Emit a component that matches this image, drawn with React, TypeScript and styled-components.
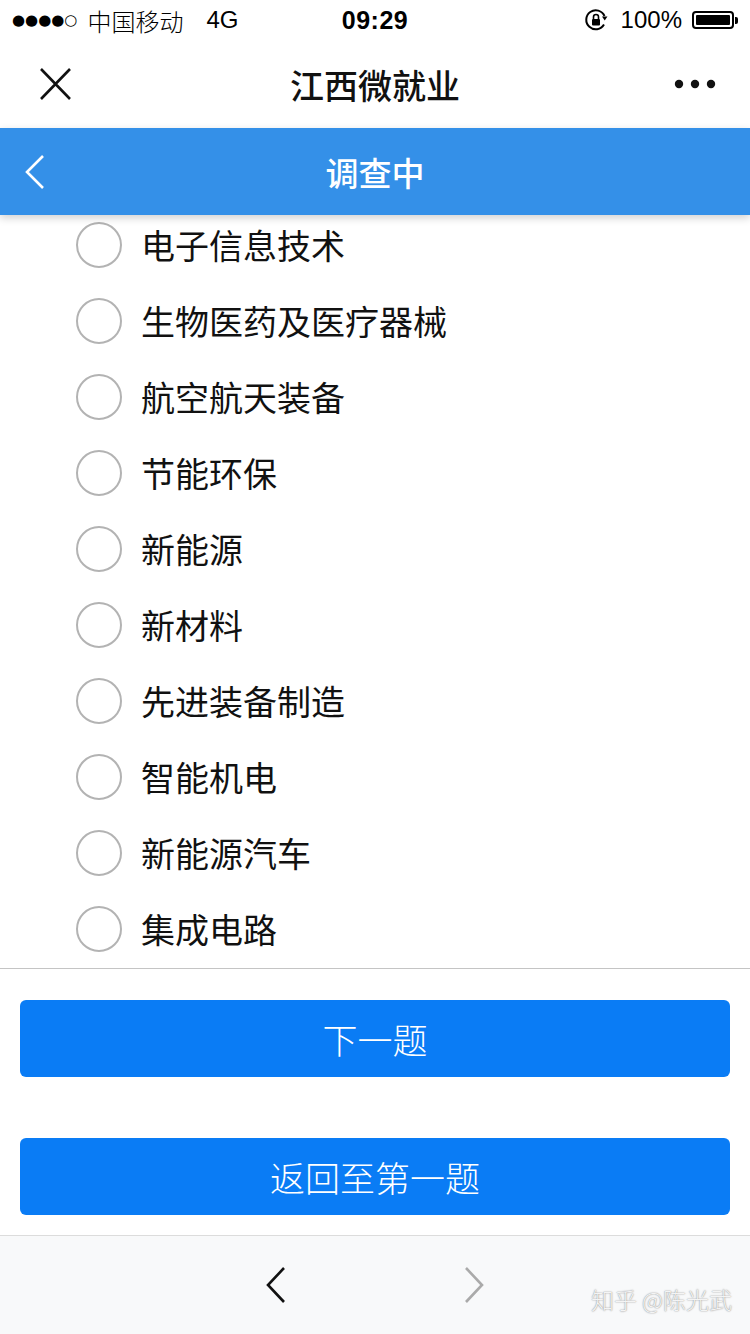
import styled, { createGlobalStyle } from "styled-components";

const GlobalStyle = createGlobalStyle`
  html, body {
    margin: 0;
    padding: 0;
    background: #ffffff;
  }
  body {
    font-family: "Noto Sans CJK SC", "Liberation Sans", sans-serif;
    color: #111;
  }
`;

const Screen = styled.div`
  width: 750px;
  height: 1334px;
  display: flex;
  flex-direction: column;
  overflow: hidden;
  background: #fff;
`;

const StatusBar = styled.div`
  height: 40px;
  display: grid;
  grid-template-columns: 1fr auto 1fr;
  align-items: center;
  padding: 0 12px;
  font-family: "Liberation Sans", "Noto Sans CJK SC", sans-serif;
  font-size: 24px;
  color: #000;
`;

const Carrier = styled.div`
  display: flex;
  align-items: center;
  gap: 10px;
  font-family: "Noto Sans CJK SC", sans-serif;
  font-weight: 300;
`;

const Signal = styled.span`
  font-size: 15px;
  font-weight: 400;
  font-family: "DejaVu Sans", sans-serif;
`;

const Network = styled.span`
  margin-left: 13px;
  font-weight: 400;
  font-family: "Liberation Sans", sans-serif;
`;

const Clock = styled.div`
  font-weight: 700;
  font-size: 25px;
  letter-spacing: 0.5px;
`;

const StatusRight = styled.div`
  display: flex;
  align-items: center;
  justify-content: flex-end;
  gap: 8px;
`;

const Percent = styled.span`
  margin-left: 4px;
`;

const Battery = styled.div`
  display: flex;
  align-items: center;
  margin-left: 2px;
`;

const BatteryBody = styled.div`
  width: 42px;
  height: 18px;
  border: 2px solid #000;
  border-radius: 4px;
  padding: 2px;
  box-sizing: border-box;
  display: flex;
`;

const BatteryFill = styled.div`
  flex: 1;
  background: #000;
  border-radius: 1px;
`;

const BatteryNub = styled.div`
  width: 3px;
  height: 7px;
  background: #000;
  border-radius: 0 2px 2px 0;
  margin-left: 1px;
`;

const NavBar = styled.div`
  height: 88px;
  display: grid;
  grid-template-columns: 100px 1fr 100px;
  align-items: center;
`;

const NavTitle = styled.div`
  text-align: center;
  font-size: 34px;
  font-weight: 500;
  color: #111;
`;

const IconSlot = styled.div<{ $align?: "left" | "right"; $pad?: number }>`
  display: flex;
  justify-content: ${(p) => (p.$align === "right" ? "flex-end" : "flex-start")};
  padding: ${(p) =>
    p.$align === "right" ? "0 34px 0 0" : `0 0 0 ${p.$pad ?? 38}px`};
`;

const BlueBar = styled.div`
  position: relative;
  z-index: 2;
  height: 87px;
  background: #3490e8;
  display: grid;
  grid-template-columns: 100px 1fr 100px;
  align-items: center;
  box-shadow: 0 3px 8px rgba(0, 0, 0, 0.18);
`;

const BarTitle = styled.div`
  text-align: center;
  color: #fff;
  font-size: 33px;
  font-weight: 500;
`;

const List = styled.div`
  flex: 0 0 762px;
  margin-top: -8px;
  border-bottom: 1px solid #c4c4c4;
  box-sizing: border-box;
  overflow: hidden;
`;

const Option = styled.label`
  height: 76px;
  display: flex;
  align-items: center;
  padding-left: 76px;
  gap: 19px;
`;

const Radio = styled.span`
  width: 42px;
  height: 42px;
  border-radius: 50%;
  border: 2px solid #b3b3b3;
  flex: 0 0 auto;
`;

const OptionText = styled.span`
  font-size: 34px;
  color: #111;
  line-height: 1;
`;

const Actions = styled.div`
  flex: 1;
  display: flex;
  flex-direction: column;
  padding: 31px 20px 0;
  gap: 61px;
`;

const PrimaryButton = styled.button`
  height: 77px;
  width: 100%;
  border: none;
  border-radius: 6px;
  background: #0a7cf5;
  color: #fff;
  font-family: "Noto Sans CJK SC", sans-serif;
  font-size: 35px;
  font-weight: 300;
  cursor: pointer;
`;

const Toolbar = styled.div`
  position: relative;
  height: 98px;
  border-top: 1px solid #dcdcdc;
  background: #f8f9fa;
  display: flex;
  align-items: center;
  justify-content: center;
  gap: 176px;
`;

const Watermark = styled.div`
  position: absolute;
  right: 18px;
  bottom: 18px;
  font-size: 23px;
  font-weight: 300;
  color: #f4f4f4;
  text-shadow: 0 0 2px rgba(0, 0, 0, 0.35), 0 0 1px rgba(0, 0, 0, 0.3);
`;

const options = [
  "电子信息技术",
  "生物医药及医疗器械",
  "航空航天装备",
  "节能环保",
  "新能源",
  "新材料",
  "先进装备制造",
  "智能机电",
  "新能源汽车",
  "集成电路",
];

function RotationLock() {
  return (
    <svg width="26" height="26" viewBox="0 0 26 26">
      <path
        d="M21 17.5 A9.5 9.5 0 1 1 21.5 9"
        fill="none"
        stroke="#000"
        strokeWidth="2"
      />
      <path d="M19 9.5 L24.5 9.5 L21.7 13.5 Z" fill="#000" />
      <rect x="9" y="12" width="8" height="6.5" rx="1" fill="#000" />
      <path d="M10.5 12 V10 a2.5 2.5 0 0 1 5 0 V12" fill="none" stroke="#000" strokeWidth="1.6" />
    </svg>
  );
}

function App() {
  return (
    <Screen>
      <GlobalStyle />
      <StatusBar>
        <Carrier>
          <Signal>●●●●○</Signal>
          <span>中国移动</span>
          <Network>4G</Network>
        </Carrier>
        <Clock>09:29</Clock>
        <StatusRight>
          <RotationLock />
          <Percent>100%</Percent>
          <Battery>
            <BatteryBody>
              <BatteryFill />
            </BatteryBody>
            <BatteryNub />
          </Battery>
        </StatusRight>
      </StatusBar>

      <NavBar>
        <IconSlot>
          <svg width="34" height="34" viewBox="0 0 34 34">
            <path d="M3 2 L32 32 M32 2 L3 32" stroke="#111" strokeWidth="2.6" />
          </svg>
        </IconSlot>
        <NavTitle>江西微就业</NavTitle>
        <IconSlot $align="right">
          <svg width="42" height="10" viewBox="0 0 42 10">
            <circle cx="5" cy="5" r="4.2" fill="#111" />
            <circle cx="21" cy="5" r="4.2" fill="#111" />
            <circle cx="37" cy="5" r="4.2" fill="#111" />
          </svg>
        </IconSlot>
      </NavBar>

      <BlueBar>
        <IconSlot $pad={24}>
          <svg width="22" height="34" viewBox="0 0 22 34">
            <path d="M19 1 L3 17 L19 33" fill="none" stroke="#fff" strokeWidth="2.6" />
          </svg>
        </IconSlot>
        <BarTitle>调查中</BarTitle>
        <div />
      </BlueBar>

      <List>
        {options.map((o) => (
          <Option key={o}>
            <Radio />
            <OptionText>{o}</OptionText>
          </Option>
        ))}
      </List>

      <Actions>
        <PrimaryButton>下一题</PrimaryButton>
        <PrimaryButton>返回至第一题</PrimaryButton>
      </Actions>

      <Toolbar>
        <svg width="22" height="36" viewBox="0 0 22 36">
          <path d="M19 1 L3 18 L19 35" fill="none" stroke="#111" strokeWidth="2.6" />
        </svg>
        <svg width="22" height="36" viewBox="0 0 22 36">
          <path d="M3 1 L19 18 L3 35" fill="none" stroke="#aaa" strokeWidth="2.6" />
        </svg>
        <Watermark>知乎 @陈光武</Watermark>
      </Toolbar>
    </Screen>
  );
}

export default App;
